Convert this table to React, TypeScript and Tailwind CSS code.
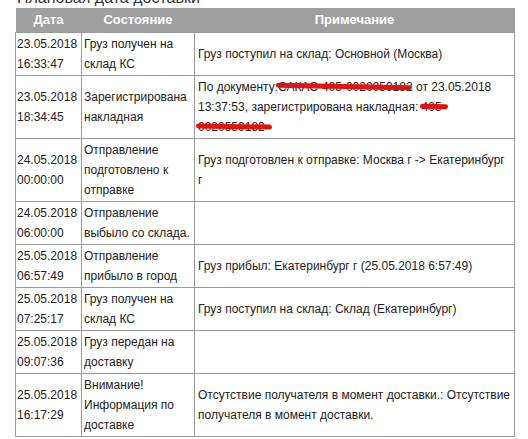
import React from "react";

type Row = { date: string; time: string; state: React.ReactNode; note: React.ReactNode };

// red marker scribble over redacted text
function Scribble({ children, w }: { children: React.ReactNode; w: string }) {
  return (
    <span className="relative inline-block">
      {children}
      <span className={`absolute left-[-2px] top-[7px] h-[5px] ${w} rounded-full bg-[#e3120e] rotate-[1deg]`} />
    </span>
  );
}

const rows: Row[] = [
  {
    date: "23.05.2018",
    time: "16:33:47",
    state: "Груз получен на склад КС",
    note: "Груз поступил на склад: Основной (Москва)",
  },
  {
    date: "23.05.2018",
    time: "18:34:45",
    state: "Зарегистрирована накладная",
    note: (
      <>
        По документу:
        <Scribble w="w-[136px]">САКАС-405-0020059182</Scribble> от 23.05.2018 13:37:53, зарегистрирована накладная:{" "}
        <Scribble w="w-[28px]">405</Scribble> <Scribble w="w-[76px]">0020559182</Scribble>
      </>
    ),
  },
  {
    date: "24.05.2018",
    time: "00:00:00",
    state: "Отправление подготовлено к отправке",
    note: "Груз подготовлен к отправке: Москва г -> Екатеринбург г",
  },
  {
    date: "24.05.2018",
    time: "06:00:00",
    state: "Отправление выбыло со склада.",
    note: "",
  },
  {
    date: "25.05.2018",
    time: "06:57:49",
    state: "Отправление прибыло в город",
    note: "Груз прибыл: Екатеринбург г (25.05.2018 6:57:49)",
  },
  {
    date: "25.05.2018",
    time: "07:25:17",
    state: "Груз получен на склад КС",
    note: "Груз поступил на склад: Склад (Екатеринбург)",
  },
  {
    date: "25.05.2018",
    time: "09:07:36",
    state: "Груз передан на доставку",
    note: "",
  },
  {
    date: "25.05.2018",
    time: "16:17:29",
    state: "Внимание! Информация по доставке",
    note: "Отсутствие получателя в момент доставки.: Отсутствие получателя в момент доставки.",
  },
];

export default function App() {
  return (
    <div className="min-h-[439px] bg-white pl-[15px] text-[#222] [font-family:'Liberation_Sans',Arial,sans-serif]">
      <div className="mt-[-12px] h-[20px] pl-[2px] text-[16px] leading-[20px] text-[#333]">Плановая дата доставки</div>
      <table className="w-[500px] table-fixed border-collapse text-[12px] leading-[20px]">
        <colgroup>
          <col className="w-[66px]" />
          <col className="w-[113px]" />
          <col />
        </colgroup>
        <thead>
          <tr className="h-[24px] bg-[#9f9f9f] text-white">
            <th className="text-[13px] font-bold">Дата</th>
            <th className="text-[13px] font-bold">Состояние</th>
            <th className="text-[13px] font-bold">Примечание</th>
          </tr>
        </thead>
        <tbody>
          {rows.map((r, i) => (
            <tr key={i}>
              <td className="border border-[#9a9a9a] px-[1px] py-[1px] align-middle">
                {r.date}
                <br />
                {r.time}
              </td>
              <td className="border border-[#9a9a9a] px-[2px] py-[1px] align-middle">{r.state}</td>
              <td className="border border-[#9a9a9a] px-[3px] py-[1px] align-middle">{r.note}</td>
            </tr>
          ))}
        </tbody>
      </table>
    </div>
  );
}
